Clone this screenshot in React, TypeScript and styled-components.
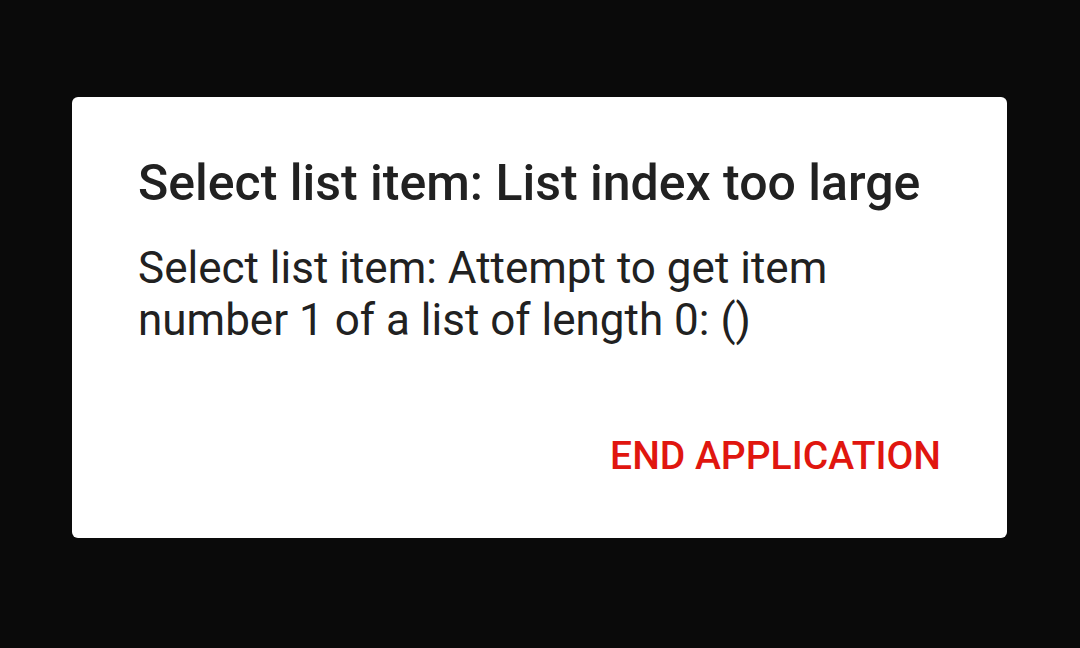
import styled, { createGlobalStyle } from 'styled-components'

const GlobalStyle = createGlobalStyle`
  html, body {
    margin: 0;
    padding: 0;
    background: #0a0a0a;
  }
  body {
    font-family: Roboto, "Noto Sans", sans-serif;
  }
`

export default function App() {
  return (
    <>
      <GlobalStyle />
      <Screen>
        <Dialog>
          <Title>Select list item: List index too large</Title>
          <Message>
            Select list item: Attempt to get item number 1 of a list of length 0: ()
          </Message>
          <Actions>
            <ActionButton>End Application</ActionButton>
          </Actions>
        </Dialog>
      </Screen>
    </>
  )
}

const Screen = styled.div`
  width: 1080px;
  height: 648px;
  background: #0a0a0a;
  padding-top: 97px;
  padding-left: 72px;
  box-sizing: border-box;
`

const Dialog = styled.div`
  width: 935px;
  height: 441px;
  box-sizing: border-box;
  background: #ffffff;
  border-radius: 6px;
  padding: 56px 66px 0 66px;
  display: flex;
  flex-direction: column;
`

const Title = styled.h2`
  margin: 0;
  font-size: 50px;
  font-weight: 500;
  line-height: 60px;
  color: #212121;
`

const Message = styled.p`
  margin: 29px 0 0;
  font-size: 44px;
  font-weight: 400;
  line-height: 52px;
  color: #212121;
  max-width: 740px;
`

const Actions = styled.div`
  display: flex;
  justify-content: flex-end;
  margin-top: 87px;
`

const ActionButton = styled.button`
  border: none;
  background: none;
  padding: 0;
  font-family: inherit;
  font-size: 39px;
  font-weight: 500;
  text-transform: uppercase;
  color: #e0160f;
  line-height: 46px;
`
